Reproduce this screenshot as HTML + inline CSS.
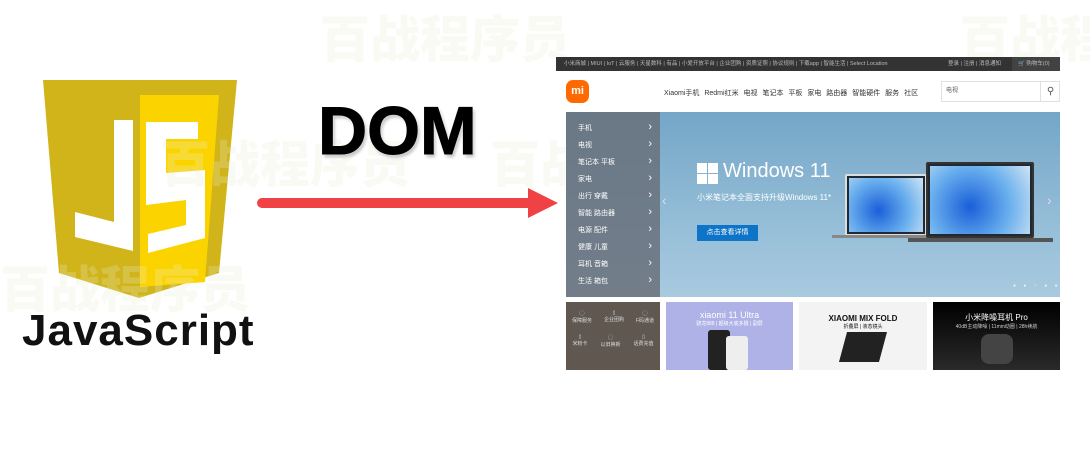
<!DOCTYPE html>
<html><head><meta charset="utf-8"><style>
*{margin:0;padding:0;box-sizing:border-box}
body{width:1090px;height:475px;background:#fff;position:relative;overflow:hidden;font-family:"Liberation Sans","Noto Sans CJK SC",sans-serif}
.a{position:absolute}
.wm{position:absolute;color:rgba(235,235,210,0.25);font-weight:900;font-family:"Noto Sans CJK SC",sans-serif;font-size:50px;white-space:nowrap}
.top{left:556px;top:57px;width:504px;height:14px;background:#333;color:#bbb;font-size:5.5px;line-height:14px;padding-left:8px;white-space:nowrap}
.nav{font-size:7px;color:#333;white-space:nowrap}
.menu div{height:17px;color:#fff;font-size:7px;line-height:17px;padding-left:12px;position:relative}
.menu div:after{content:"›";position:absolute;right:8px;top:-1px;font-size:11px}
</style></head><body>
<div class="wm" style="left:320px;top:0px">百战程序员</div>
<div class="wm" style="left:960px;top:0px">百战程序员</div>

<svg class="a" style="left:0;top:0" width="560" height="300">
<polygon points="43,80 237,80 219,273 139,298 59,273" fill="#d1b41a"/>
<polygon points="140,95 219,95 205,282 140,287" fill="#fbd400"/>
<polygon points="114,120 133,120 133,251 75,237 75,212 114,222" fill="#fff"/>
<polygon points="146,122 198,122 198,139 166,139 166,173 205,170 205,238 148,253 148,234 186,225 186,200 146,205" fill="#fff"/>
<line x1="262" y1="203" x2="532" y2="203" stroke="#f04245" stroke-width="10" stroke-linecap="round"/>
<polygon points="528,188 558,203 528,218" fill="#f04245"/>
</svg>
<div class="wm" style="left:160px;top:125px">百战程序员</div>
<div class="wm" style="left:490px;top:125px">百战程序员</div>
<div class="wm" style="left:0px;top:250px">百战程序员</div>
<div class="a" style="left:318px;top:92px;font-size:68px;font-weight:bold;color:#000;-webkit-text-stroke:1px #000;text-shadow:0 0 3px #fff,2px 3px 3px #bbb">DOM</div>
<div class="a" style="left:22px;top:306px;font-size:44px;font-weight:bold;color:#111;letter-spacing:1px">JavaScript</div>

<div class="a top">小米商城 | MIUI | IoT | 云服务 | 天星数科 | 有品 | 小爱开放平台 | 企业团购 | 资质证照 | 协议规则 | 下载app | 智能生活 | Select Location
<span style="position:absolute;left:392px">登录 | 注册 | 消息通知</span>
<span style="position:absolute;right:0;top:0;width:48px;height:14px;background:#424242;padding-left:6px">🛒 购物车(0)</span></div>
<div class="a" style="left:566px;top:80px;width:23px;height:23px;background:#ff6900;border-radius:7px;color:#fff;font-weight:bold;font-size:11px;text-align:center;line-height:23px">mi</div>
<div class="a nav" style="left:664px;top:88px;word-spacing:3px">Xiaomi手机 Redmi红米 电视 笔记本 平板 家电 路由器 智能硬件 服务 社区</div>
<div class="a" style="left:941px;top:81px;width:119px;height:21px;border:1px solid #e0e0e0;font-size:6px;color:#555;line-height:19px;padding-left:4px;background:#fff">电视<span style="position:absolute;left:98px;top:0;width:20px;height:19px;border-left:1px solid #e0e0e0;text-align:center;font-size:10px">⚲</span></div>

<div class="a" style="left:566px;top:112px;width:494px;height:185px;background:linear-gradient(180deg,#74a6c7,#9ac1da 70%,#a8cadf)"></div>
<div class="a" style="left:566px;top:112px;width:94px;height:185px;background:rgba(105,112,122,0.85)"></div>
<div class="a menu" style="left:566px;top:120px;width:94px">
<div>手机</div><div>电视</div><div>笔记本 平板</div><div>家电</div><div>出行 穿戴</div><div>智能 路由器</div><div>电源 配件</div><div>健康 儿童</div><div>耳机 音箱</div><div>生活 箱包</div></div>
<svg class="a" style="left:697px;top:163px" width="21" height="21"><rect x="0" y="0" width="10" height="10" fill="#fff"/><rect x="11" y="0" width="10" height="10" fill="#fff"/><rect x="0" y="11" width="10" height="10" fill="#fff"/><rect x="11" y="11" width="10" height="10" fill="#fff"/></svg>
<div class="a" style="left:723px;top:160px;color:#fff;font-size:20px">Windows 11</div>
<div class="a" style="left:697px;top:192px;color:#fff;font-size:8px">小米笔记本全面支持升级Windows 11*</div>
<div class="a" style="left:697px;top:225px;width:61px;height:16px;background:#0d74c8;color:#fff;font-size:7px;line-height:16px;text-align:center">点击查看详情</div>
<div class="a" style="left:662px;top:192px;color:#dde;font-size:14px">‹</div>
<div class="a" style="left:1047px;top:192px;color:#dde;font-size:14px">›</div>
<div class="a" style="left:845px;top:174px;width:82px;height:62px;background:#1f2a35;border:2px solid #ddd;border-radius:2px"><div style="margin:2px;height:54px;background:radial-gradient(circle at 40% 60%,#1a5fd8,#6ab0ee 55%,#cfe3f2)"></div></div>
<div class="a" style="left:832px;top:235px;width:100px;height:3px;background:#888"></div>
<div class="a" style="left:926px;top:162px;width:108px;height:76px;background:#1f2a35;border:2px solid #333;border-radius:2px"><div style="margin:2px;height:68px;background:radial-gradient(circle at 40% 60%,#1a5fd8,#6ab0ee 55%,#cfe3f2)"></div></div>
<div class="a" style="left:908px;top:238px;width:145px;height:4px;background:#555"></div>
<div class="a" style="left:1013px;top:283px;color:#eee;font-size:5px;letter-spacing:3px">● ● ○ ● ●</div>

<div class="a" style="left:566px;top:302px;width:94px;height:68px;background:#5f5750;color:#ddd;font-size:5px">
<div style="display:flex;justify-content:space-around;padding-top:8px;text-align:center"><span>◯<br>保障服务</span><span>▯<br>企业团购</span><span>◯<br>F码通道</span></div>
<div style="display:flex;justify-content:space-around;padding-top:10px;text-align:center"><span>▯<br>米粉卡</span><span>◯<br>以旧换新</span><span>▯<br>话费充值</span></div></div>
<div class="a" style="left:666px;top:302px;width:127px;height:68px;background:#aeb2e6;color:#fff;text-align:center;font-size:9px;padding-top:8px;overflow:hidden">xiaomi 11 Ultra<div style="font-size:5px">骁龙888 | 超级大底多摄 | 副屏</div>
<div style="position:absolute;left:42px;top:28px;width:22px;height:40px;background:#222;border-radius:3px"></div><div style="position:absolute;left:60px;top:34px;width:22px;height:34px;background:#eee;border-radius:3px"></div></div>
<div class="a" style="left:799px;top:302px;width:128px;height:68px;background:#f3f3f3;color:#111;text-align:center;font-size:8px;font-weight:bold;padding-top:12px">XIAOMI MIX FOLD<div style="font-size:5px;font-weight:normal">折叠屏 | 液态镜头</div>
<div style="position:absolute;left:44px;top:30px;width:40px;height:30px;background:#222;transform:skewX(-15deg)"></div></div>
<div class="a" style="left:933px;top:302px;width:127px;height:68px;background:linear-gradient(#000,#2a2a2a);color:#fff;text-align:center;font-size:8px;padding-top:10px">小米降噪耳机 Pro<div style="font-size:5px;color:#ccc">40dB主动降噪 | 11mm动圈 | 28h续航</div>
<div style="position:absolute;left:48px;top:32px;width:32px;height:30px;background:#444;border-radius:8px"></div></div>
</body></html>
